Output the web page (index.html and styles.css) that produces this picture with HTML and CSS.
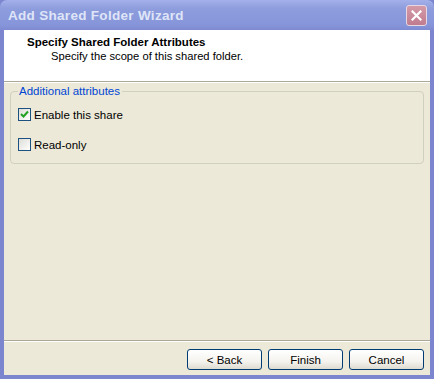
FILE: index.html
```html
<!DOCTYPE html>
<html lang="en">
<head>
    <meta charset="UTF-8">
    <title>Add Shared Folder Wizard</title>
    <link rel="stylesheet" href="styles.css">
</head>
<body>

<div class="window">
    <div class="titlebar">
        <span class="title">Add Shared Folder Wizard</span>
        <button class="close" aria-label="Close">
            <svg width="11" height="11" viewBox="0 0 11 11">
                <path d="M1.5 1.5 L9.5 9.5 M9.5 1.5 L1.5 9.5" stroke="#fff" stroke-width="2.2" stroke-linecap="square"/>
            </svg>
        </button>
    </div>

    <div class="frame">
        <div class="header">
            <div class="heading">Specify Shared Folder Attributes</div>
            <div class="subheading">Specify the scope of this shared folder.</div>
        </div>

        <div class="content">
            <fieldset class="group">
                <legend>Additional attributes</legend>
                <label class="check">
                    <span class="box checked">
                        <svg width="9" height="9" viewBox="0 0 9 9">
                            <path d="M1 4 L3.5 6.5 L8 1.5" fill="none" stroke="#21a121" stroke-width="2"/>
                        </svg>
                    </span>
                    Enable this share
                </label>
                <label class="check">
                    <span class="box"></span>
                    Read-only
                </label>
            </fieldset>
        </div>

        <div class="footer">
            <button class="btn">&lt; Back</button>
            <button class="btn">Finish</button>
            <button class="btn">Cancel</button>
        </div>
    </div>
</div>

</body>
</html>
```

FILE: styles.css
```css
body {
    margin: 0;
    font-family: 'Liberation Sans', Arial, sans-serif;
    font-size: 11.5px;
    color: #000;
}
.window {
    width: 434px;
    height: 379px;
    box-sizing: border-box;
    display: flex;
    flex-direction: column;
    background-color: #7b86cf;
}
.titlebar {
    height: 30px;
    display: flex;
    align-items: center;
    justify-content: space-between;
    padding: 0 7px 0 8px;
    background: linear-gradient(#a3b0ea, #8d9cdc 30%, #8796da 80%, #7e8bd2);
    border-radius: 7px 7px 0 0;
}
.title {
    font-family: 'Liberation Sans', Arial, sans-serif;
    font-weight: bold;
    font-size: 13.5px;
    color: #dfe5f8;
    letter-spacing: 0.3px;
}
.close {
    width: 21px;
    height: 21px;
    padding: 0;
    margin-top: 1px;
    border: 1px solid #e8d8e4;
    border-radius: 3px;
    background: linear-gradient(#d49aa8, #c07c8f);
    display: flex;
    align-items: center;
    justify-content: center;
}
.frame {
    flex: 1;
    margin: 0 4px 4px 4px;
    display: flex;
    flex-direction: column;
    background-color: #ece9d8;
}
.header {
    height: 52px;
    background-color: #fff;
    border-bottom: 1px solid #aca899;
    box-shadow: 0 1px 0 #fff;
    padding: 5px 0 0 23px;
    box-sizing: border-box;
}
.heading {
    font-weight: bold;
    font-size: 11.5px;
    margin-top: 1px;
}
.subheading {
    margin: 2px 0 0 24px;
    font-size: 11.2px;
}
.content {
    flex: 1;
    padding: 3px 6px 0 6px;
}
.group {
    margin: 0;
    height: 66px;
    padding: 11px 8px 0 7px;
    border: 1px solid #d0d0bf;
    border-radius: 4px;
    display: flex;
    flex-direction: column;
    gap: 17px;
}
.group legend {
    color: #0046d5;
    padding: 0 2px 0 1px;
    margin-left: 0;
}
.check {
    display: flex;
    align-items: center;
    gap: 3px;
    height: 13px;
}
.box {
    width: 11px;
    height: 11px;
    border: 1px solid #1c5180;
    background: linear-gradient(135deg, #dcdcd7, #fff);
    display: flex;
    align-items: center;
    justify-content: center;
}
.footer {
    height: 35px;
    border-top: 1px solid #aca899;
    box-shadow: inset 0 1px 0 #fff;
    display: flex;
    justify-content: flex-end;
    align-items: flex-start;
    gap: 6px;
    padding: 8px 6px 0 0;
    box-sizing: border-box;
}
.btn {
    width: 75px;
    height: 21px;
    padding: 0;
    font-family: 'Liberation Sans', Arial, sans-serif;
    font-size: 11.5px;
    color: #000;
    border: 1px solid #003c74;
    border-radius: 3px;
    background: linear-gradient(#ffffff, #f4f3ee 60%, #dedbd0);
}
```
